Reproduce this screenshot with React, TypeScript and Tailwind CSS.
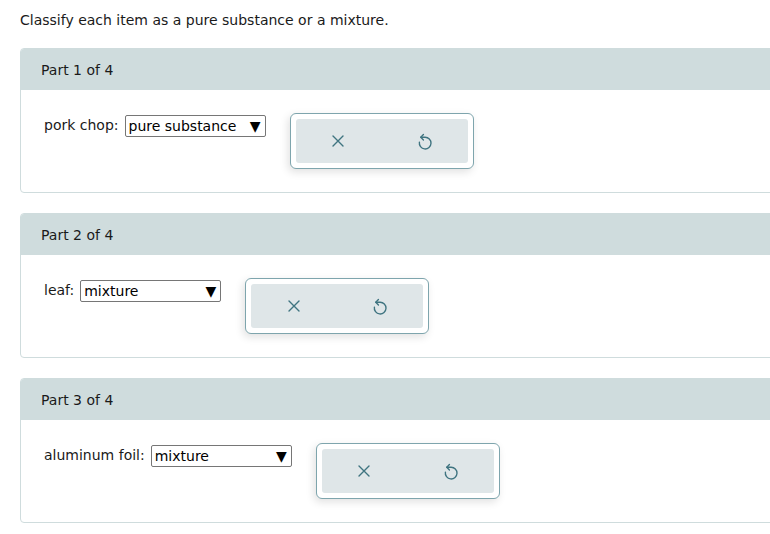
const parts = [
  { n: 1, label: 'pork chop:', value: 'pure substance' },
  { n: 2, label: 'leaf:', value: 'mixture' },
  { n: 3, label: 'aluminum foil:', value: 'mixture' },
];

function XIcon() {
  return (
    <svg width="14" height="14" viewBox="0 0 14 14" fill="none" stroke="#3f7480" strokeWidth="1.4" strokeLinecap="round">
      <path d="M2 2L12 12M12 2L2 12" />
    </svg>
  );
}

function UndoIcon() {
  return (
    <svg width="15" height="17" viewBox="0 0 14 16" fill="none" stroke="#3f7480" strokeWidth="1.3" strokeLinecap="round" strokeLinejoin="round">
      <path d="M6 1.5L3.5 4L6 6.5" />
      <path d="M3.5 4H7.5A5.5 5.5 0 1 1 2.2 8.6" />
    </svg>
  );
}

function Select({ value }: { value: string }) {
  return (
    <div className="flex items-center justify-between w-[141px] h-[22px] border border-[#767676] rounded-[2px] pl-[3px] pr-[4px] bg-white">
      <span className="text-[14px] text-black leading-none -mt-[1px]">{value}</span>
      <span className="text-[14px] leading-none text-black">▼</span>
    </div>
  );
}

export default function App() {
  return (
    <div className="w-[770px] h-[534px] overflow-hidden bg-white font-['DejaVu_Sans',Verdana,sans-serif] text-[#1a1a1a]">
      <p className="px-[20px] pt-[10px] text-[14px] leading-[20px]">Classify each item as a pure substance or a mixture.</p>

      <div className="flex flex-col gap-[20px] mt-[18px] ml-[20px]">
        {parts.map((p) => (
          <div key={p.n} className="w-[760px] border border-[#cfdcdd] rounded-[4px] overflow-hidden">
            <div className="h-[41px] bg-[#cfdcdd] flex items-center pl-[20px] pt-[2px] text-[14px]">Part {p.n} of 4</div>
            <div className="flex items-start pt-[23px] pb-[23px] pl-[23px]">
              <div className="flex items-center gap-[6px] mt-[2px]">
                <span className="text-[14px] -mt-[1px]">{p.label}</span>
                <Select value={p.value} />
              </div>
              <div className="ml-[24px] w-[184px] h-[56px] border border-[#7ea5ad] rounded-[6px] p-[5px] bg-white shadow-[-2px_3px_8px_rgba(0,0,0,0.12)]">
                <div className="h-full bg-[#dfe6e8] rounded-[3px] flex items-center justify-around">
                  <XIcon />
                  <UndoIcon />
                </div>
              </div>
            </div>
          </div>
        ))}
      </div>
    </div>
  );
}
